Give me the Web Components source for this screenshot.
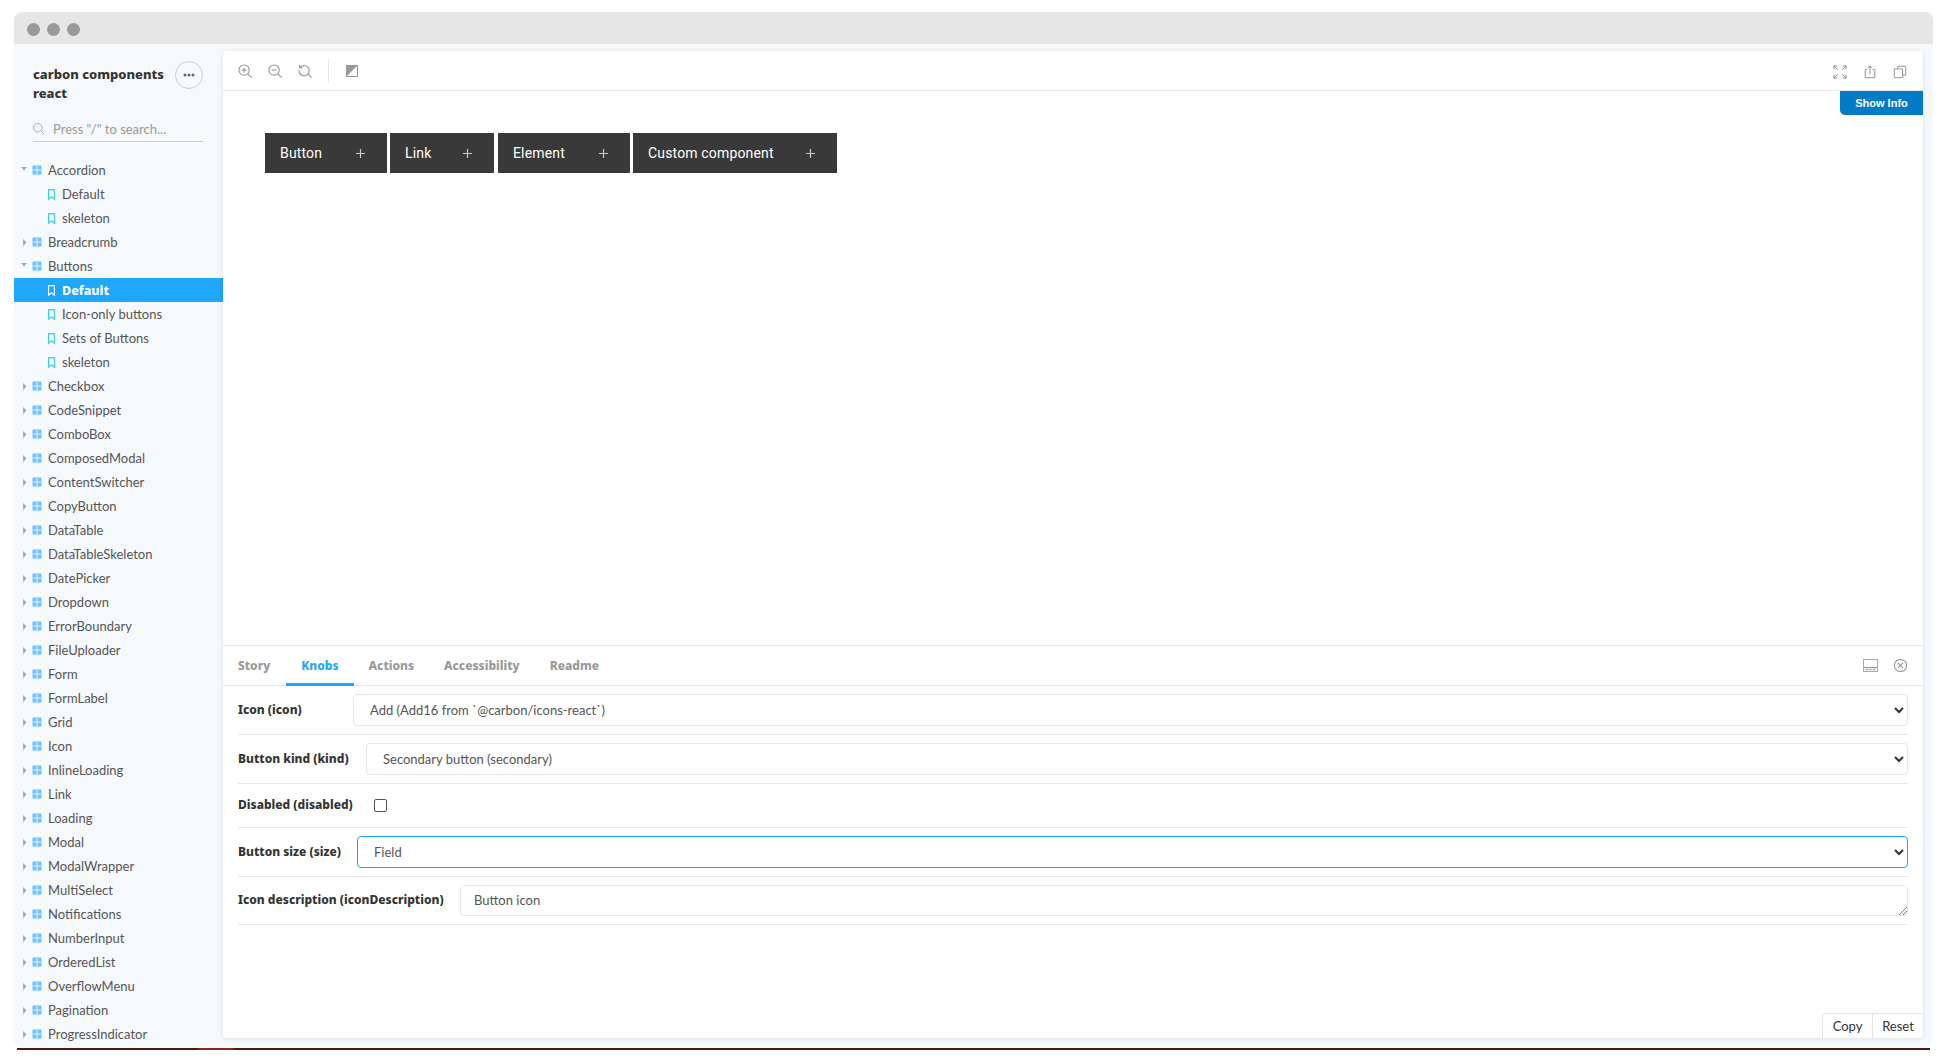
<!doctype html>
<html>
<head>
<meta charset="utf-8">
<title>carbon components react</title>
<style>
  html, body { margin: 0; height: 100%; background: #fff; overflow: hidden; }
  body { font-family: Lato, "Noto Sans", sans-serif; color: #333; }
</style>
</head>
<body>
<sb-app></sb-app>
<script>
const ICONS = {
  zoomIn: '<circle cx="6.5" cy="6.5" r="5.5"/><path d="M10.5 10.5L14.5 14.5M6.5 4v5M4 6.5h5"/>',
  zoomOut: '<circle cx="6.5" cy="6.5" r="5.5"/><path d="M10.5 10.5L14.5 14.5M4 6.5h5"/>',
  zoomReset: '<path d="M2.2 3.6A5.5 5.5 0 1 1 1 6.5M1.6 1v3h3M10.5 10.5L14.5 14.5"/>',
  expand: '<path d="M1 5V1h4M1 1l4.5 4.5M15 5V1h-4M15 1l-4.5 4.5M1 11v4h4M1 15l4.5-4.5M15 11v4h-4M15 15l-4.5-4.5"/>',
  share: '<path d="M5 5H2.5v9.5h11V5H11M8 10.5V1M5.5 3.5L8 1l2.5 2.5"/>',
  copy: '<path d="M5.5 4V1.5h9v10H11M1.5 4.5h9.5v10H1.5z"/>',
  closeCircle: '<circle cx="8" cy="8" r="6.5"/><path d="M5.2 5.2l5.6 5.6M10.8 5.2l-5.6 5.6"/>'
}

function icon(name, size) {
  return `<svg width="${size}" height="${size}" viewBox="0 0 16 16" fill="none" stroke="#8f8f8f" stroke-width="1.1">${ICONS[name]}</svg>`
}

customElements.define(
  'sb-tree-item',
  class SbTreeItem extends HTMLElement {
    constructor() {
      super()
      const kind = this.getAttribute('kind') || 'component'
      const open = this.hasAttribute('open')
      const arrow = open
        ? '<path d="M0 0h6L3 3.5z" fill="#a8a8a8"/>'
        : '<path d="M0 0v7l3.5-3.5z" fill="#a8a8a8"/>'
      const glyph = kind === 'story'
        ? `<svg class="glyph" width="7" height="11" viewBox="0 0 7 11" fill="none" stroke="${this.hasAttribute('selected') ? '#fff' : '#37d5d3'}" stroke-width="1.2"><path d="M.6.6h5.8v9.6L3.5 7.8.6 10.2z"/></svg>`
        : `<svg class="glyph" width="10" height="10" viewBox="0 0 10 10"><rect x=".5" y=".5" width="9" height="9" rx="1.5" fill="#70c4fe" stroke="#a8dbfe"/><path d="M5 1v8M1 5h8" stroke="#e3f3ff"/></svg>`
      this.attachShadow({ mode: 'open' })
      this.shadowRoot.innerHTML = `
        <style>
          :host {
            display: flex;
            align-items: center;
            height: 24px;
            font-size: 13px;
            color: #555;
            white-space: nowrap;
          }
          :host([kind="story"]) { padding-left: 34px; }
          :host(:not([kind="story"])) { padding-left: 7px; }
          :host([selected]) {
            background: #1ea7fd;
            color: #fff;
            font: 800 12.5px "Noto Sans", sans-serif;
          }
          .arrow { width: 11px; display: flex; align-items: center; }
          .glyph { flex: none; margin-right: 6px; }
          :host([kind="story"]) .glyph { margin-right: 7px; }
        </style>
        ${kind === 'story' ? '' : `<span class="arrow"><svg width="7" height="7" viewBox="0 0 7 7" style="margin-left:${open ? 0 : 2}px">${arrow}</svg></span>`}
        ${glyph}
        <slot></slot>
      `
    }
  }
)

customElements.define(
  'sb-sidebar',
  class SbSidebar extends HTMLElement {
    constructor() {
      super()
      const stories = ['Checkbox', 'CodeSnippet', 'ComboBox', 'ComposedModal', 'ContentSwitcher', 'CopyButton', 'DataTable', 'DataTableSkeleton', 'DatePicker', 'Dropdown', 'ErrorBoundary', 'FileUploader', 'Form', 'FormLabel', 'Grid', 'Icon', 'InlineLoading', 'Link', 'Loading', 'Modal', 'ModalWrapper', 'MultiSelect', 'Notifications', 'NumberInput', 'OrderedList', 'OverflowMenu', 'Pagination', 'ProgressIndicator']
      this.attachShadow({ mode: 'open' })
      this.shadowRoot.innerHTML = `
        <style>
          :host {
            display: block;
            width: 209px;
            flex: none;
            background: #f6f9fc;
            overflow: hidden;
          }
          .head {
            display: flex;
            justify-content: space-between;
            padding: 17px 20px 0 19px;
            height: 72px;
            box-sizing: border-box;
          }
          .title {
            font: 800 13px/19px "Noto Sans", sans-serif;
            color: #333;
            padding-top: 4px;
            width: 135px;
          }
          .menu {
            width: 28px;
            height: 28px;
            box-sizing: border-box;
            border: 1px solid #ccc;
            border-radius: 50%;
            display: flex;
            align-items: center;
            justify-content: center;
          }
          .search {
            display: flex;
            align-items: center;
            gap: 9px;
            margin: 0 20px 0 19px;
            height: 26px;
            box-sizing: border-box;
            border-bottom: 1px solid #c9ccd0;
            font-size: 13px;
            color: #999;
          }
          .tree { margin-top: 16px; }
        </style>
        <div class="head">
          <div class="title">carbon components react</div>
          <div class="menu"><svg width="12" height="4" viewBox="0 0 12 4" fill="#666"><circle cx="2" cy="2" r="1.5"/><circle cx="6" cy="2" r="1.5"/><circle cx="10" cy="2" r="1.5"/></svg></div>
        </div>
        <div class="search">
          <svg width="11" height="11" viewBox="0 0 11 11" fill="none" stroke="#aaa"><circle cx="4.7" cy="4.7" r="4.2"/><path d="M7.8 7.8l3 3"/></svg>
          <span>Press "/" to search...</span>
        </div>
        <div class="tree">
          <sb-tree-item open>Accordion</sb-tree-item>
          <sb-tree-item kind="story">Default</sb-tree-item>
          <sb-tree-item kind="story">skeleton</sb-tree-item>
          <sb-tree-item>Breadcrumb</sb-tree-item>
          <sb-tree-item open>Buttons</sb-tree-item>
          <sb-tree-item kind="story" selected>Default</sb-tree-item>
          <sb-tree-item kind="story">Icon-only buttons</sb-tree-item>
          <sb-tree-item kind="story">Sets of Buttons</sb-tree-item>
          <sb-tree-item kind="story">skeleton</sb-tree-item>
          ${stories.map(s => `<sb-tree-item>${s}</sb-tree-item>`).join('')}
        </div>
      `
    }
  }
)

customElements.define(
  'sb-toolbar',
  class SbToolbar extends HTMLElement {
    constructor() {
      super()
      this.attachShadow({ mode: 'open' })
      this.shadowRoot.innerHTML = `
        <style>
          :host {
            display: flex;
            align-items: center;
            height: 40px;
            box-sizing: border-box;
            flex: none;
            border-bottom: 1px solid #e6e6e6;
            padding: 1px 16px 0 15px;
          }
          .icons { display: flex; align-items: center; gap: 15px; margin-top: 1px; }
          .sep { width: 1px; height: 24px; background: #e6e6e6; margin: 0 17px 0 15px; }
          .contrast { width: 12px; height: 12px; display: block; }
          .right { margin-left: auto; gap: 16px; }
        </style>
        <div class="icons">
          ${icon('zoomIn', 15)}${icon('zoomOut', 15)}${icon('zoomReset', 15)}
        </div>
        <span class="sep"></span>
        <svg class="contrast" viewBox="0 0 12 12"><rect x=".5" y=".5" width="11" height="11" fill="#fff" stroke="#999"/><path d="M0 12L12 0H0z" fill="#999"/></svg>
        <div class="icons right">
          ${icon('expand', 14)}${icon('share', 14)}${icon('copy', 14)}
        </div>
      `
    }
  }
)

customElements.define(
  'sb-carbon-button',
  class SbCarbonButton extends HTMLElement {
    constructor() {
      super()
      this.attachShadow({ mode: 'open' })
      this.shadowRoot.innerHTML = `
        <style>
          :host {
            display: flex;
            align-items: center;
            justify-content: space-between;
            flex: none;
            height: 40px;
            box-sizing: border-box;
            padding: 0 22px 0 15px;
            background: #393939;
            color: #fff;
            font: 14px Roboto, sans-serif;
            letter-spacing: .16px;
            white-space: nowrap;
          }
          svg { flex: none; }
        </style>
        <slot></slot>
        <svg width="9" height="9" viewBox="0 0 9 9" stroke="#c8c8c8" stroke-width="1.2"><path d="M4.5 0v9M0 4.5h9"/></svg>
      `
    }
  }
)

customElements.define(
  'sb-preview',
  class SbPreview extends HTMLElement {
    constructor() {
      super()
      this.attachShadow({ mode: 'open' })
      this.shadowRoot.innerHTML = `
        <style>
          :host {
            display: block;
            position: relative;
            flex: 1;
            min-height: 0;
            padding: 42px 0 0 42px;
            box-sizing: border-box;
          }
          .buttons { display: flex; }
          sb-carbon-button:nth-child(1) { width: 122px; margin-right: 3px; }
          sb-carbon-button:nth-child(2) { width: 104px; margin-right: 4px; }
          sb-carbon-button:nth-child(3) { width: 132px; margin-right: 3px; }
          sb-carbon-button:nth-child(4) { width: 204px; }
          .info {
            position: absolute;
            top: 0;
            right: 0;
            width: 83px;
            height: 24px;
            display: flex;
            align-items: center;
            justify-content: center;
            background: #027ac5;
            color: #fff;
            font: 700 11px "Liberation Sans", Arial, sans-serif;
            border-bottom-left-radius: 5px;
          }
        </style>
        <div class="buttons">
          <sb-carbon-button>Button</sb-carbon-button>
          <sb-carbon-button>Link</sb-carbon-button>
          <sb-carbon-button>Element</sb-carbon-button>
          <sb-carbon-button>Custom component</sb-carbon-button>
        </div>
        <div class="info">Show Info</div>
      `
    }
  }
)

customElements.define(
  'sb-knob-row',
  class SbKnobRow extends HTMLElement {
    constructor() {
      super()
      const label = this.getAttribute('label')
      this.attachShadow({ mode: 'open' })
      this.shadowRoot.innerHTML = `
        <style>
          :host {
            display: flex;
            align-items: center;
            box-sizing: border-box;
            height: 49px;
            border-bottom: 1px solid #e6e6e6;
            font-size: 13px;
          }
          .label {
            flex: none;
            width: var(--label-width);
            font: 800 12px "Noto Sans", sans-serif;
            color: #333;
            white-space: nowrap;
            position: relative;
            top: -1px;
          }
        </style>
        <span class="label">${label}</span>
        <slot></slot>
      `
    }
  }
)

customElements.define(
  'sb-knob-field',
  class SbKnobField extends HTMLElement {
    constructor() {
      super()
      const isArea = this.hasAttribute('area')
      this.attachShadow({ mode: 'open' })
      this.shadowRoot.innerHTML = `
        <style>
          :host {
            display: flex;
            flex: 1;
            align-items: center;
            justify-content: space-between;
            height: 32px;
            box-sizing: border-box;
            border: 1px solid #e6e6e6;
            border-radius: 4px;
            padding: 0 3px 0 16px;
            color: #555;
            font-size: 13px;
            position: relative;
          }
          :host([focused]) { border-color: #1ea7fd; }
          :host([area]) { padding: 0 3px 2px 13px; height: 31px; }
          .resize { position: absolute; right: 0; bottom: 0; }
        </style>
        <slot></slot>
        ${isArea
          ? '<svg class="resize" width="9" height="9" viewBox="0 0 9 9" stroke="#555" stroke-width=".8"><path d="M1 9l8-8M5 9l4-4"/></svg>'
          : '<svg width="10" height="7" viewBox="0 0 10 7" fill="none" stroke="#333" stroke-width="2"><path d="M1 1l4 4 4-4"/></svg>'}
      `
    }
  }
)

customElements.define(
  'sb-addons',
  class SbAddons extends HTMLElement {
    constructor() {
      super()
      const tabs = ['Story', 'Knobs', 'Actions', 'Accessibility', 'Readme']
      this.attachShadow({ mode: 'open' })
      this.shadowRoot.innerHTML = `
        <style>
          :host {
            display: flex;
            flex-direction: column;
            position: relative;
            height: 393px;
            flex: none;
            box-sizing: border-box;
            border-top: 1px solid #e6e6e6;
          }
          .tabs {
            display: flex;
            align-items: stretch;
            height: 40px;
            box-sizing: border-box;
            border-bottom: 1px solid #e6e6e6;
            padding: 0 15px;
            flex: none;
          }
          .tab {
            display: flex;
            align-items: center;
            padding: 1px 15px 0;
            font: 800 12px "Noto Sans", sans-serif;
            color: #999;
            margin-bottom: -1px;
            border-bottom: 3px solid transparent;
            box-sizing: border-box;
          }
          .tab:first-child { padding-left: 0; padding-right: 16px; }
          .tab.active { color: #1ea7fd; border-bottom-color: #1ea7fd; }
          .tools { margin-left: auto; display: flex; align-items: center; gap: 15px; }
          .rows { padding: 0 15px; }
          .checkbox {
            width: 13px;
            height: 13px;
            box-sizing: border-box;
            border: 1px solid #555;
            border-radius: 2px;
          }
          .actions {
            position: absolute;
            right: 0;
            bottom: 0;
            display: flex;
            height: 25px;
            box-sizing: border-box;
            border: 1px solid #e6e6e6;
            border-width: 1px 0 0 1px;
            border-top-left-radius: 4px;
            font-size: 13px;
            color: #333;
          }
          .actions span { display: flex; align-items: center; justify-content: center; }
          .actions span:first-child { width: 49px; border-right: 1px solid #e6e6e6; }
          .actions span:last-child { width: 50px; }
        </style>
        <div class="tabs">
          ${tabs.map(t => `<div class="tab ${t === 'Knobs' ? 'active' : ''}">${t}</div>`).join('')}
          <div class="tools">
            <svg width="15" height="13" viewBox="0 0 15 13"><rect x=".5" y=".5" width="14" height="12" fill="#eee" stroke="#aaa"/><rect x="1" y="1" width="13" height="7" fill="#fff"/><path d="M1 8.5h13" stroke="#999"/><path d="M3 10.5h9" stroke="#999" stroke-dasharray="2 1.5"/></svg>
            ${icon('closeCircle', 15)}
          </div>
        </div>
        <div class="rows">
          <sb-knob-row label="Icon (icon)" style="--label-width: 115px"><sb-knob-field>Add (Add16 from \`@carbon/icons-react\`)</sb-knob-field></sb-knob-row>
          <sb-knob-row label="Button kind (kind)" style="--label-width: 128px"><sb-knob-field>Secondary button (secondary)</sb-knob-field></sb-knob-row>
          <sb-knob-row label="Disabled (disabled)" style="--label-width: 136px; height: 44px"><div class="checkbox"></div></sb-knob-row>
          <sb-knob-row label="Button size (size)" style="--label-width: 119px"><sb-knob-field focused>Field</sb-knob-field></sb-knob-row>
          <sb-knob-row label="Icon description (iconDescription)" style="--label-width: 222px; height: 48px"><sb-knob-field area>Button icon</sb-knob-field></sb-knob-row>
        </div>
        <div class="actions"><span>Copy</span><span>Reset</span></div>
      `
    }
  }
)

customElements.define(
  'sb-app',
  class SbApp extends HTMLElement {
    constructor() {
      super()
      this.attachShadow({ mode: 'open' })
      this.shadowRoot.innerHTML = `
        <style>
          :host {
            display: block;
            padding: 12px 14px 0;
            height: 1062px;
            box-sizing: border-box;
          }
          .window {
            display: flex;
            flex-direction: column;
            height: 1036px;
            border-radius: 8px;
            overflow: hidden;
            background: #f6f9fc;
          }
          .chrome {
            display: flex;
            align-items: center;
            gap: 7px;
            height: 32px;
            flex: none;
            padding: 2px 0 0 13px;
            box-sizing: border-box;
            background: #e6e6e6;
          }
          .chrome i { width: 13px; height: 13px; border-radius: 50%; background: #999; }
          .body { display: flex; flex: 1; min-height: 0; }
          .main {
            flex: 1;
            display: flex;
            flex-direction: column;
            margin: 7px 10px 10px 0;
            background: #fff;
            border-radius: 4px;
            box-shadow: 0 1px 5px rgba(0, 0, 0, .1);
            overflow: hidden;
          }
          .edge {
            height: 2px;
            margin: 0 3px;
            background: linear-gradient(90deg, #4f1a17 181px, #8b2420 181px, #8b2420 217px, #4f1a17 217px);
          }
        </style>
        <div class="window">
          <div class="chrome"><i></i><i></i><i></i></div>
          <div class="body">
            <sb-sidebar></sb-sidebar>
            <div class="main">
              <sb-toolbar></sb-toolbar>
              <sb-preview></sb-preview>
              <sb-addons></sb-addons>
            </div>
          </div>
        </div>
        <div class="edge"></div>
      `
    }
  }
)
</script>
</body>
</html>
